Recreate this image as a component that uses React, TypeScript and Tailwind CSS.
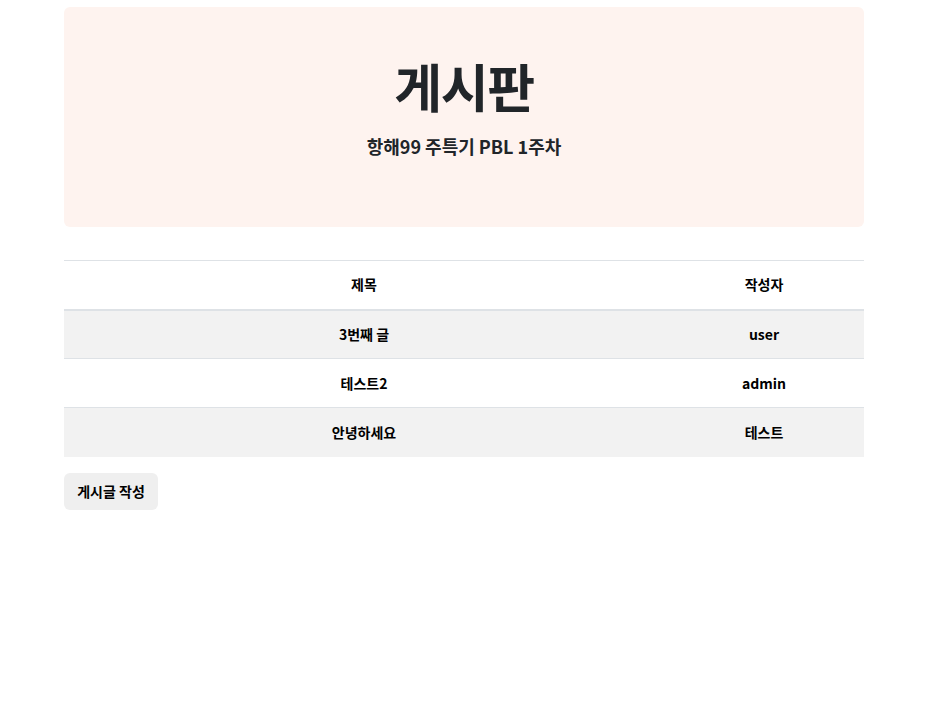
const ROWS = [
  { title: "3번째 글", author: "user" },
  { title: "테스트2", author: "admin" },
  { title: "안녕하세요", author: "테스트" },
];

export default function App() {
  return (
    <div
      className="min-h-screen bg-white text-[#212529]"
      style={{ fontFamily: '"Noto Sans CJK KR", "Noto Sans", sans-serif' }}
    >
      <div className="ml-[64px] w-[800px] pt-[7px]">
        <div className="flex h-[220px] flex-col items-center rounded-md bg-[#fef3ef] pt-[47px]">
          <h1 className="text-[52px] font-bold leading-[64px] tracking-tight">게시판</h1>
          <p className="mt-[14px] text-[18px] font-bold leading-[28px]">항해99 주특기 PBL 1주차</p>
        </div>

        <table className="mt-[33px] w-full text-[14px] text-black">
          <thead>
            <tr className="border-t border-b-2 border-t-[#dee2e6] border-b-[#dee2e6]">
              <th className="h-[49px] w-[600px] text-center font-bold">제목</th>
              <th className="h-[49px] text-center font-bold">작성자</th>
            </tr>
          </thead>
          <tbody>
            {ROWS.map((r, i) => (
              <tr
                key={r.title}
                className={`border-b border-[#dee2e6] last:border-0 ${i % 2 === 0 ? "bg-[#f2f2f2]" : "bg-white"}`}
              >
                <td className="h-[49px] text-center font-semibold">{r.title}</td>
                <td className="h-[49px] text-center font-semibold">{r.author}</td>
              </tr>
            ))}
          </tbody>
        </table>

        <button className="mt-[16px] h-[37px] w-[94px] rounded-md bg-[#efefef] text-[14px] font-bold text-black">
          게시글 작성
        </button>
      </div>
    </div>
  );
}
